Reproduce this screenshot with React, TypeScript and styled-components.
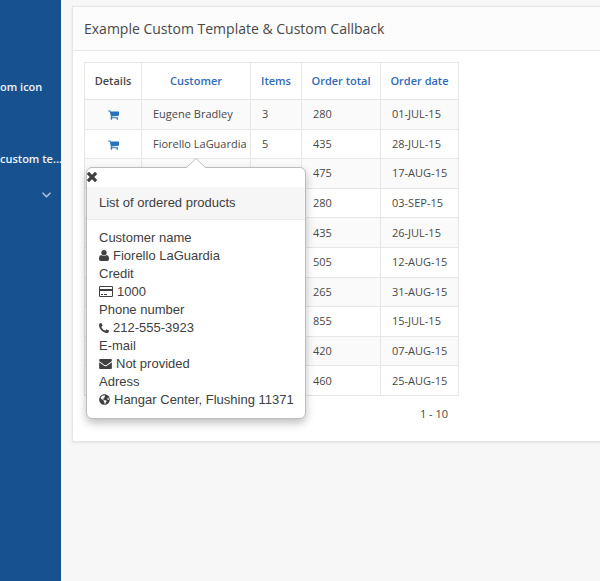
import React from "react";
import styled, { createGlobalStyle } from "styled-components";
import { FaGlobeAmericas } from "react-icons/fa";

const GlobalStyle = createGlobalStyle`
  * { box-sizing: border-box; }
  body {
    margin: 0;
    background: #f7f7f7;
    color: #484848;
    font-family: "Open Sans", "Noto Sans", sans-serif;
    font-size: 11px;
    line-height: 16px;
  }
  button {
    font: inherit;
    color: inherit;
    background: none;
    border: 0;
    padding: 0;
    cursor: pointer;
  }
`;

const Page = styled.div`
  display: grid;
  grid-template-columns: 61px minmax(0, 1fr);
  min-height: 100vh;
  overflow: hidden;
`;

const Sidebar = styled.nav`
  background: #18528e;
  color: #eef4fa;
  padding-top: 69px;
`;

const NavLink = styled.a`
  display: flex;
  align-items: center;
  height: 36px;
  color: inherit;
  font-size: 11px;
  font-weight: 600;
  white-space: nowrap;
  text-decoration: none;
`;

const NavGap = styled.div`
  height: 36px;
`;

const NavToggle = styled.button`
  display: flex;
  align-items: center;
  justify-content: flex-end;
  width: 100%;
  height: 36px;
  padding-right: 10px;
`;

const Main = styled.main`
  padding: 6px 0 0 11px;
`;

const Region = styled.section`
  background: #fff;
  border: 1px solid #e6e6e6;
  border-right: 0;
  box-shadow: 0 1px 2px rgba(0, 0, 0, 0.08);
`;

const RegionHeader = styled.header`
  background: #fcfcfc;
  border-bottom: 1px solid #e6e6e6;
  padding: 12px 11px 11px;
`;

const RegionTitle = styled.h2`
  margin: 0;
  font-size: 14px;
  font-weight: 400;
  line-height: 20px;
`;

const RegionBody = styled.div`
  display: flex;
  flex-direction: column;
  align-items: flex-start;
  padding: 11px 11px 19px;
`;

const Report = styled.div`
  display: flex;
  flex-direction: column;
`;

const Table = styled.table`
  border-collapse: collapse;
  table-layout: fixed;
  width: 374px;
  height: 334px;
`;

const HeadCell = styled.th<{ $width: number }>`
  width: ${(p) => p.$width}px;
  height: 37px;
  padding: 0;
  border: 1px solid #e6e6e6;
  font-weight: 600;
  white-space: nowrap;
`;

const SortButton = styled.button`
  color: #2f6bb8;
`;

const Row = styled.tr`
  height: 29px;
  &:nth-child(odd) { background: #fafafa; }
`;

const Cell = styled.td<{ $center?: boolean }>`
  padding: 0 11px;
  border: 1px solid #e6e6e6;
  text-align: ${(p) => (p.$center ? "center" : "left")};
  white-space: nowrap;
`;

const IconButton = styled.button`
  display: inline-flex;
  vertical-align: middle;
  color: #2672be;
`;

const Pagination = styled.div`
  padding: 10px 11px 0;
  text-align: right;
`;

const Anchor = styled.span`
  position: relative;
  display: inline-block;
`;

const Popover = styled.div`
  position: absolute;
  top: 31px;
  left: -67px;
  z-index: 1;
  width: 220px;
  background: #fff;
  border: 1px solid #bdbdbd;
  border-radius: 6px;
  box-shadow: 0 4px 8px rgba(0, 0, 0, 0.25);
  color: #404040;
  font-family: "Liberation Sans", Arial, sans-serif;
  font-size: 13px;
  line-height: 18px;
`;

const Arrow = styled.svg`
  position: absolute;
  top: -10px;
  left: 50%;
  margin-left: -10px;
`;

const CloseButton = styled.button`
  display: flex;
  align-items: center;
  height: 19px;
`;

const PopoverTitle = styled.h3`
  margin: 0;
  padding: 7px 12px;
  background: #f6f6f6;
  border-bottom: 1px solid #ebebeb;
  font-size: 13px;
  font-weight: 400;
`;

const Details = styled.dl`
  margin: 0;
  padding: 9px 12px;
`;

const Term = styled.dt`
  margin: 0;
`;

const Value = styled.dd`
  display: flex;
  align-items: center;
  gap: 4px;
  margin: 0;
  white-space: nowrap;
  svg { flex-shrink: 0; }
`;

const Glyph = styled.svg`
  display: block;
  fill: currentColor;
`;

const CART =
  "M704 1536q0 52-38 90t-90 38-90-38-38-90 38-90 90-38 90 38 38 90zm896 0q0 52-38 90t-90 38-90-38-38-90 38-90 90-38 90 38 38 90zm128-1088v512q0 24-16.500 42.500t-40.500 21.500l-1044 122q13 60 13 70 0 16-24 64h920q26 0 45 19t19 45-19 45-45 19h-1024q-26 0-45-19t-19-45q0-11 8-31.500t16-36 21.500-40 15.500-29.500l-177-823h-204q-26 0-45-19t-19-45 19-45 45-19h256q16 0 28.500 6.500t19.500 15.500 13 24.500 8 26 5.500 29.500 4.500 26h1201q26 0 45 19t19 45z";
const TIMES =
  "M1490 1322q0 40-28 68l-136 136q-28 28-68 28t-68-28l-294-294-294 294q-28 28-68 28t-68-28l-136-136q-28-28-28-68t28-68l294-294-294-294q-28-28-28-68t28-68l136-136q28-28 68-28t68 28l294 294 294-294q28-28 68-28t68 28l136 136q28 28 28 68t-28 68l-294 294 294 294q28 28 28 68z";
const USER =
  "M1600 1405q0 120-73 189.500t-194 69.500h-874q-121 0-194-69.500t-73-189.500q0-53 3.500-103.500t14-109 26.500-108.500 43-97.500 62-81 85.500-53.500 111.500-20q9 0 42 21.500t74.500 48 108 48 133.500 21.500 133.500-21.500 108-48 74.500-48 42-21.500q61 0 111.500 20t85.500 53.500 62 81 43 97.500 26.500 108.500 14 109 3.500 103.500zm-320-893q0 159-112.500 271.500t-271.500 112.500-271.500-112.500-112.500-271.500 112.500-271.500 271.500-112.500 271.500 112.500 112.500 271.500z";
const PHONE =
  "M1600 1240q0 27-10 70.500t-21 68.500q-21 50-122 106-94 51-186 51-27 0-53-3.500t-57.500-12.500-47-14.500-55.500-20.500-49-18q-98-35-175-83-127-79-264-216t-216-264q-48-77-83-175-3-9-18-49t-20.500-55.500-14.500-47-12.500-57.500-3.500-53q0-92 51-186 56-101 106-122 25-11 68.500-21t70.500-10q14 0 21 3 18 6 53 76 11 19 30 54t35 63.500 31 53.500q3 4 17.500 25t21.500 35.500 7 28.500q0 20-28.500 50t-62 55-62 53-28.500 46q0 9 5 22.500t8.500 20.500 14 24 11.500 19q76 137 174 235t235 174q2 1 19 11.500t24 14 20.500 8.500 22.500 5q18 0 46-28.500t53-62 55-62 50-28.500q14 0 28.500 7t35.500 21.500 25 17.500q25 15 53.500 31t63.500 35 54 30q70 35 76 53 3 7 3 21z";
const ENVELOPE =
  "M1792 710v794q0 66-47 113t-113 47h-1472q-66 0-113-47t-47-113v-794q44 49 101 87 362 246 497 345 57 42 92.500 65.500t94.500 48 110 24.500h2q51 0 110-24.500t94.500-48 92.500-65.500q170-123 498-345 57-39 100-87zm0-294q0 79-49 151t-122 123q-376 261-468 325-10 7-42.500 30.500t-54 38-52 32.500-57.500 27-50 9h-2q-23 0-50-9t-57.500-27-52-32.500-54-38-42.500-30.500q-91-64-262-182.500t-205-142.500q-62-42-117-115.500t-55-136.500q0-78 41.500-130t118.500-52h1472q65 0 112.500 47t47.500 113z";

const UserIcon = () => (
  <Glyph width="10" height="11" viewBox="192 128 1408 1536"><path d={USER} /></Glyph>
);
const PhoneIcon = () => (
  <Glyph width="10" height="10" viewBox="192 128 1408 1408"><path d={PHONE} /></Glyph>
);
const EnvelopeIcon = () => (
  <Glyph width="13" height="10" viewBox="0 256 1792 1408"><path d={ENVELOPE} /></Glyph>
);
const CardIcon = () => (
  <Glyph width="14" height="11" viewBox="0 0 14 11">
    <path
      fillRule="evenodd"
      d="M1.200 0h11.600a1.200 1.200 0 0 1 1.200 1.200v8.600a1.200 1.200 0 0 1-1.200 1.200h-11.600a1.200 1.200 0 0 1-1.200-1.200v-8.600a1.200 1.200 0 0 1 1.200-1.200zM1 1v2h12v-2zM1 5v5h12v-5zM2 8h2v1h-2zM5 8h3v1h-3z"
    />
  </Glyph>
);

const fields = [
  { term: "Customer name", icon: <UserIcon />, value: "Fiorello LaGuardia" },
  { term: "Credit", icon: <CardIcon />, value: "1000" },
  { term: "Phone number", icon: <PhoneIcon />, value: "212-555-3923" },
  { term: "E-mail", icon: <EnvelopeIcon />, value: "Not provided" },
  { term: "Adress", icon: <FaGlobeAmericas size={11} />, value: "Hangar Center, Flushing 11371" },
];

const columns = [
  { label: "Details", width: 57, sortable: false },
  { label: "Customer", width: 109, sortable: true },
  { label: "Items", width: 51, sortable: true },
  { label: "Order total", width: 79, sortable: true },
  { label: "Order date", width: 78, sortable: true },
];

const orders = [
  { customer: "Eugene Bradley", items: "3", total: "280", date: "01-JUL-15" },
  { customer: "Fiorello LaGuardia", items: "5", total: "435", date: "28-JUL-15", open: true },
  { total: "475", date: "17-AUG-15" },
  { total: "280", date: "03-SEP-15" },
  { total: "435", date: "26-JUL-15" },
  { total: "505", date: "12-AUG-15" },
  { total: "265", date: "31-AUG-15" },
  { total: "855", date: "15-JUL-15" },
  { total: "420", date: "07-AUG-15" },
  { total: "460", date: "25-AUG-15" },
];

const CustomerPopover = () => (
  <Popover role="dialog" aria-labelledby="popover-title">
    <Arrow width="20" height="10" viewBox="0 0 20 10">
      <path d="M0 10L10 0.500L20 10" fill="#fff" stroke="#bdbdbd" />
    </Arrow>
    <CloseButton type="button">
      <Glyph width="10" height="10" viewBox="302 366 1188 1188"><path d={TIMES} /></Glyph>
    </CloseButton>
    <PopoverTitle id="popover-title">List of ordered products</PopoverTitle>
    <Details>
      {fields.map((f) => (
        <React.Fragment key={f.term}>
          <Term>{f.term}</Term>
          <Value>{f.icon}{f.value}</Value>
        </React.Fragment>
      ))}
    </Details>
  </Popover>
);

export default function App() {
  return (
    <>
      <GlobalStyle />
      <Page>
        <Sidebar>
          <NavLink href="#icon">om icon</NavLink>
          <NavGap />
          <NavLink href="#template">custom te...</NavLink>
          <NavToggle type="button">
            <svg width="9" height="6" viewBox="0 0 9 6" fill="none" stroke="#a9c6e4" strokeWidth="1.500">
              <path d="M0.500 0.700L4.500 4.700L8.500 0.700" />
            </svg>
          </NavToggle>
        </Sidebar>
        <Main>
          <Region>
            <RegionHeader>
              <RegionTitle>Example Custom Template &amp; Custom Callback</RegionTitle>
            </RegionHeader>
            <RegionBody>
              <Report>
                <Table>
                  <thead>
                    <tr>
                      {columns.map((c) => (
                        <HeadCell key={c.label} $width={c.width} scope="col">
                          {c.sortable ? <SortButton type="button">{c.label}</SortButton> : c.label}
                        </HeadCell>
                      ))}
                    </tr>
                  </thead>
                  <tbody>
                    {orders.map((o) => (
                      <Row key={o.date}>
                        <Cell $center>
                          {o.customer && (
                            <IconButton type="button">
                              <Glyph width="11" height="10" viewBox="64 192 1664 1472"><path d={CART} /></Glyph>
                            </IconButton>
                          )}
                        </Cell>
                        <Cell>
                          <Anchor>
                            {o.customer}
                            {o.open && <CustomerPopover />}
                          </Anchor>
                        </Cell>
                        <Cell>{o.items}</Cell>
                        <Cell>{o.total}</Cell>
                        <Cell>{o.date}</Cell>
                      </Row>
                    ))}
                  </tbody>
                </Table>
                <Pagination>1 - 10</Pagination>
              </Report>
            </RegionBody>
          </Region>
        </Main>
      </Page>
    </>
  );
}
